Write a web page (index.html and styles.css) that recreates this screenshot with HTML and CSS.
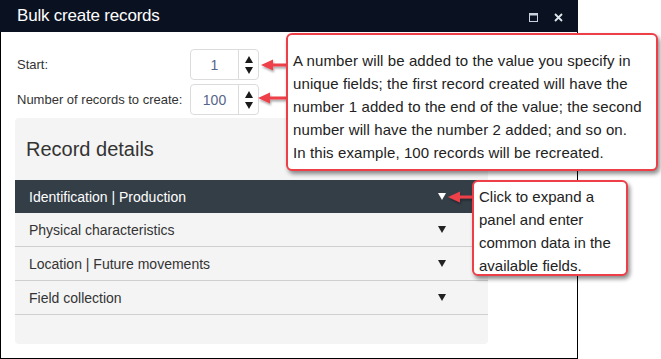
FILE: index.html
```
<!DOCTYPE html>
<html>
<head>
<meta charset="utf-8">
<link rel="stylesheet" href="styles.css">
</head>
<body>
<div class="dialog">
  <div class="titlebar">
    <span class="title">Bulk create records</span>
    <span class="tools">
      <svg class="ico" width="9" height="9" viewBox="0 0 9 9"><rect x="0.5" y="0.5" width="8" height="8" fill="none" stroke="#c9d2dc" stroke-width="1"/><rect x="0" y="0" width="9" height="2.5" fill="#c9d2dc"/></svg>
      <svg class="ico" width="9" height="9" viewBox="0 0 9 9"><path d="M1 1 L8 8 M8 1 L1 8" stroke="#dfe6ee" stroke-width="1.8"/></svg>
    </span>
  </div>
  <div class="content">
    <div class="field">
      <label class="lbl">Start:</label>
      <div class="spin"><span class="val">1</span><span class="btns"><i class="up"></i><i class="dn"></i></span></div>
    </div>
    <div class="field">
      <label class="lbl">Number of records to create:</label>
      <div class="spin"><span class="val">100</span><span class="btns"><i class="up"></i><i class="dn"></i></span></div>
    </div>
    <div class="panel">
      <h2 class="heading">Record details</h2>
      <div class="row active"><span>Identification | Production</span><i class="caret"></i></div>
      <div class="row"><span>Physical characteristics</span><i class="caret"></i></div>
      <div class="row"><span>Location | Future movements</span><i class="caret"></i></div>
      <div class="row"><span>Field collection</span><i class="caret"></i></div>
    </div>
  </div>
</div>

<svg class="arrows" width="661" height="359" viewBox="0 0 661 359">
  <defs>
    <filter id="sh" x="-20%" y="-50%" width="140%" height="200%"><feDropShadow dx="1" dy="2" stdDeviation="1" flood-color="#000" flood-opacity="0.35"/></filter>
  </defs>
  <g fill="#ee3f48" stroke="none" filter="url(#sh)">
    <rect x="272" y="63.5" width="16" height="3"/>
    <path d="M261 65 L273 59.5 L273 70.5 Z"/>
    <rect x="269" y="96.5" width="19" height="3"/>
    <path d="M258 98 L270 92.5 L270 103.5 Z"/>
    <rect x="459" y="195.5" width="15" height="3"/>
    <path d="M448 197 L460 191.5 L460 202.5 Z"/>
  </g>
</svg>

<div class="callout c1">A number will be added to the value you specify in unique fields; the first record created will have the number 1 added to the end of the value; the second number will have the number 2 added; and so on.<br>In this example, 100 records will be recreated.</div>
<div class="callout c2">Click to expand a panel and enter common data in the available fields.</div>
</body>
</html>
```
FILE: styles.css
```
* { box-sizing: border-box; }
html, body { margin: 0; padding: 0; background: #fff; }
body {
  font-family: "Liberation Sans", Arial, sans-serif;
  width: 661px; height: 359px; position: relative; overflow: hidden;
}
.dialog {
  width: 578px; height: 359px;
  border-left: 1px solid #000; border-right: 1px solid #000; border-bottom: 1px solid #000;
  background: #fff;
  display: flex; flex-direction: column;
}
.titlebar {
  height: 32px; background: #0a1120; color: #fff;
  display: flex; align-items: center; justify-content: space-between;
  padding: 0 15px 0 17px;
  margin-left: -1px; margin-right: -1px;
}
.title { font-size: 17px; letter-spacing: -0.2px; }
.tools { display: flex; gap: 16px; align-items: center; padding-top: 2px; }
.ico { display: block; }
.content { padding: 17px 0 0 14px; display: flex; flex-direction: column; }
.field { display: flex; align-items: center; height: 31px; margin-bottom: 4px; }
.lbl { width: 175px; padding-left: 2px; font-size: 13px; color: #333; }
.spin {
  width: 69px; height: 31px; border: 1px solid #dcdcdc; border-radius: 4px;
  display: flex;
}
.val { width: 48px; border-right: 1px solid #dcdcdc; display: flex; align-items: center; justify-content: center; font-size: 14px; color: #56658a; }
.btns { flex: 1; display: flex; flex-direction: column; align-items: center; justify-content: space-between; padding: 6px 0 5px; }
.up { width: 0; height: 0; border-left: 4px solid transparent; border-right: 4px solid transparent; border-bottom: 7px solid #1a1a1a; }
.dn { width: 0; height: 0; border-left: 4px solid transparent; border-right: 4px solid transparent; border-top: 7px solid #1a1a1a; }
.panel {
  margin-top: -1px; width: 473px; height: 226px;
  background: #f4f4f4; border-radius: 4px;
  display: flex; flex-direction: column;
}
.heading { margin: 0; height: 62px; padding: 20px 0 0 11px; font-weight: normal; font-size: 20px; color: #333; }
.row {
  height: 34px; display: flex; align-items: center; justify-content: space-between;
  padding: 0 42px 0 14px; font-size: 14px; color: #333;
  border-bottom: 1px solid #cfcfcf;
}
.row.active { background: #343e47; color: #fff; height: 33px; border-bottom: none; }
.caret { width: 0; height: 0; border-left: 4.5px solid transparent; border-right: 4.5px solid transparent; border-top: 7px solid #222; }
.row.active .caret { border-top-color: #fff; }
.arrows { position: absolute; left: 0; top: 0; pointer-events: none; }
.callout {
  position: absolute; background: #fff;
  border: 2px solid #ee3f48; border-radius: 6px;
  box-shadow: 2px 3px 4px rgba(0,0,0,0.45);
  font-size: 15px; line-height: 23px; color: #222;
}
.c1 { left: 286px; top: 33px; width: 372px; height: 138px; padding: 14px 6px 0 5px; letter-spacing: 0.1px; }
.c2 { left: 472px; top: 180px; width: 156px; height: 96px; padding: 3px 4px 0 5px; }
```
